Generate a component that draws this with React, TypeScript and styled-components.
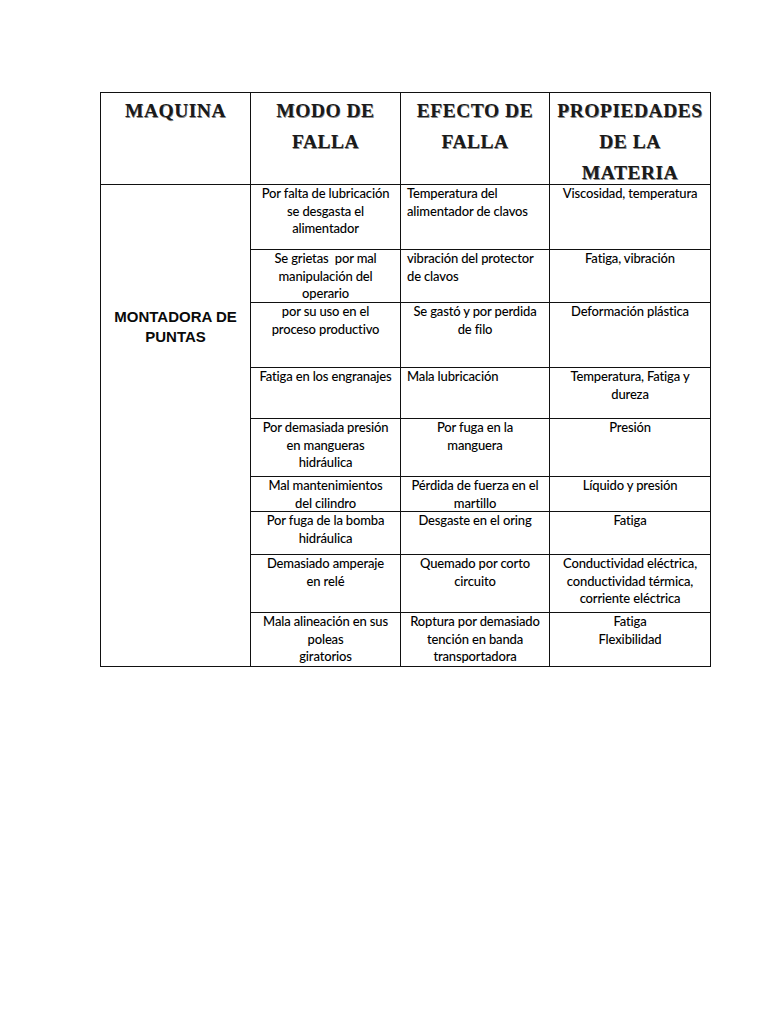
import React from "react";
import styled, { createGlobalStyle } from "styled-components";

const Global = createGlobalStyle`
  html, body { margin: 0; padding: 0; background: #ffffff; }
  body { font-family: Lato, "Liberation Sans", sans-serif; color: #111; }
`;

const Page = styled.div`
  width: 768px;
  min-height: 1024px;
  padding: 92px 0 0 100px;
  box-sizing: border-box;
  background: #fff;
`;

const Table = styled.div`
  display: grid;
  grid-template-columns: 150px 150px 149px 161px;
  grid-template-rows: 92px 65px 53px 65px 51px 58px 35px 43px 58px 54px;
  width: 611px;
  box-sizing: border-box;
  border-left: 1px solid #111;
  border-top: 1px solid #111;
`;

const HeaderCell = styled.div`
  box-sizing: border-box;
  border-right: 1px solid #111;
  border-bottom: 1px solid #111;
  padding-top: 2px;
  text-align: center;
  font-family: "Liberation Serif", "DejaVu Serif", serif;
  font-weight: bold;
  font-size: 19.5px;
  letter-spacing: 0.5px;
  line-height: 31px;
  color: #1a1a1a;
  text-shadow: 0.6px 0.6px 0 #8a8a8a;
  white-space: nowrap;
`;

const MachineCell = styled.div`
  grid-column: 1;
  grid-row: 2 / span 9;
  box-sizing: border-box;
  border-right: 1px solid #111;
  border-bottom: 1px solid #111;
  padding-top: 122px;
  text-align: center;
  font-family: "Liberation Sans", Arial, sans-serif;
  font-weight: bold;
  font-size: 15px;
  line-height: 19.5px;
  color: #0a0a0a;
`;

const Cell = styled.div<{ $align: "left" | "center" }>`
  box-sizing: border-box;
  border-right: 1px solid #111;
  border-bottom: 1px solid #111;
  padding: 0 6px;
  text-align: ${(p) => p.$align};
  font-family: Lato, "Liberation Sans", sans-serif;
  font-weight: 500;
  font-size: 13px;
  letter-spacing: -0.15px;
  line-height: 17.5px;
  color: #000;
  white-space: nowrap;
`;

type C = { lines: string[]; align: "left" | "center" };
const c = (align: "left" | "center", ...lines: string[]): C => ({ lines, align });

const headers = [["MAQUINA"], ["MODO DE", "FALLA"], ["EFECTO DE", "FALLA"], ["PROPIEDADES", "DE LA", "MATERIA"]];

const rows: C[][] = [
  [
    c("center", "Por falta de lubricación", "se desgasta el", "alimentador"),
    c("left", "Temperatura del", "alimentador de clavos"),
    c("center", "Viscosidad, temperatura"),
  ],
  [
    c("center", "Se grietas \u00a0por mal", "manipulación del", "operario"),
    c("left", "vibración del protector", "de clavos"),
    c("center", "Fatiga, vibración"),
  ],
  [
    c("center", "por su uso en el", "proceso productivo"),
    c("center", "Se gastó y por perdida", "de filo"),
    c("center", "Deformación plástica"),
  ],
  [
    c("center", "Fatiga en los engranajes"),
    c("left", "Mala lubricación"),
    c("center", "Temperatura, Fatiga y", "dureza"),
  ],
  [
    c("center", "Por demasiada presión", "en mangueras", "hidráulica"),
    c("center", "Por fuga en la", "manguera"),
    c("center", "Presión"),
  ],
  [
    c("center", "Mal mantenimientos", "del cilindro"),
    c("center", "Pérdida de fuerza en el", "martillo"),
    c("center", "Líquido y presión"),
  ],
  [
    c("center", "Por fuga de la bomba", "hidráulica"),
    c("center", "Desgaste en el oring"),
    c("center", "Fatiga"),
  ],
  [
    c("center", "Demasiado amperaje", "en relé"),
    c("center", "Quemado por corto", "circuito"),
    c("center", "Conductividad eléctrica,", "conductividad térmica,", "corriente eléctrica"),
  ],
  [
    c("center", "Mala alineación en sus", "poleas", "giratorios"),
    c("center", "Roptura por demasiado", "tención en banda", "transportadora"),
    c("center", "Fatiga", "Flexibilidad"),
  ],
];

const Lines = ({ lines }: { lines: string[] }) => (
  <>
    {lines.map((l, i) => (
      <React.Fragment key={i}>
        {i > 0 && <br />}
        {l}
      </React.Fragment>
    ))}
  </>
);

export default function App() {
  return (
    <>
      <Global />
      <Page>
        <Table>
          {headers.map((h, i) => (
            <HeaderCell key={i}>
              <Lines lines={h} />
            </HeaderCell>
          ))}
          <MachineCell>
            MONTADORA DE
            <br />
            PUNTAS
          </MachineCell>
          {rows.map((r, ri) =>
            r.map((cell, ci) => (
              <Cell key={`${ri}-${ci}`} $align={cell.align}>
                <Lines lines={cell.lines} />
              </Cell>
            ))
          )}
        </Table>
      </Page>
    </>
  );
}
